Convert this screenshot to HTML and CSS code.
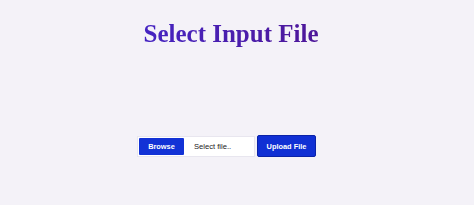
FILE: index.html
```html
<!DOCTYPE html>
<html>
<head>
<meta charset="utf-8">
<link rel="stylesheet" href="styles.css">
</head>
<body>
<div class="page">
  <h1 class="title">Select Input File</h1>
  <div class="uploader">
    <div class="picker">
      <span class="browse">Browse</span>
      <span class="filename">Select file..</span>
    </div>
    <button class="upload">Upload File</button>
  </div>
</div>
</body>
</html>
```
FILE: styles.css
```css
html, body {
  margin: 0;
  padding: 0;
  background: #f4f2f8;
}
.page {
  width: 474px;
  height: 205px;
  display: flex;
  flex-direction: column;
  align-items: center;
  box-sizing: border-box;
  padding-right: 12px;
}
.title {
  margin: 18px 0 0 0;
  font-family: "Liberation Serif", "Times New Roman", serif;
  font-weight: bold;
  font-size: 25px;
  line-height: 32px;
  background: linear-gradient(90deg, #4524c2, #4e1799);
  -webkit-background-clip: text;
  background-clip: text;
  color: transparent;
}
.uploader {
  margin-top: 85px;
  margin-right: 9px;
  display: flex;
  align-items: center;
  gap: 2px;
  font-family: "Liberation Sans", Arial, sans-serif;
  font-size: 7.4px;
}
.picker {
  display: flex;
  align-items: center;
  background: #ffffff;
  border: 1px solid #e8e6ef;
  padding: 1px;
  width: 118px;
  height: 21px;
  box-sizing: border-box;
}
.browse {
  background: #1232d6;
  color: #fff;
  font-weight: bold;
  width: 45px;
  height: 17px;
  display: flex;
  align-items: center;
  justify-content: center;
  border-radius: 1px;
}
.filename {
  color: #222;
  margin-left: 10px;
  font-size: 7.6px;
}
.upload {
  background: #1030d4;
  color: #fff;
  font-family: "Liberation Sans", Arial, sans-serif;
  font-weight: bold;
  font-size: 7.4px;
  width: 59px;
  height: 22px;
  border: 1px solid #0a22a8;
  border-radius: 2px;
  padding: 0;
}
```
